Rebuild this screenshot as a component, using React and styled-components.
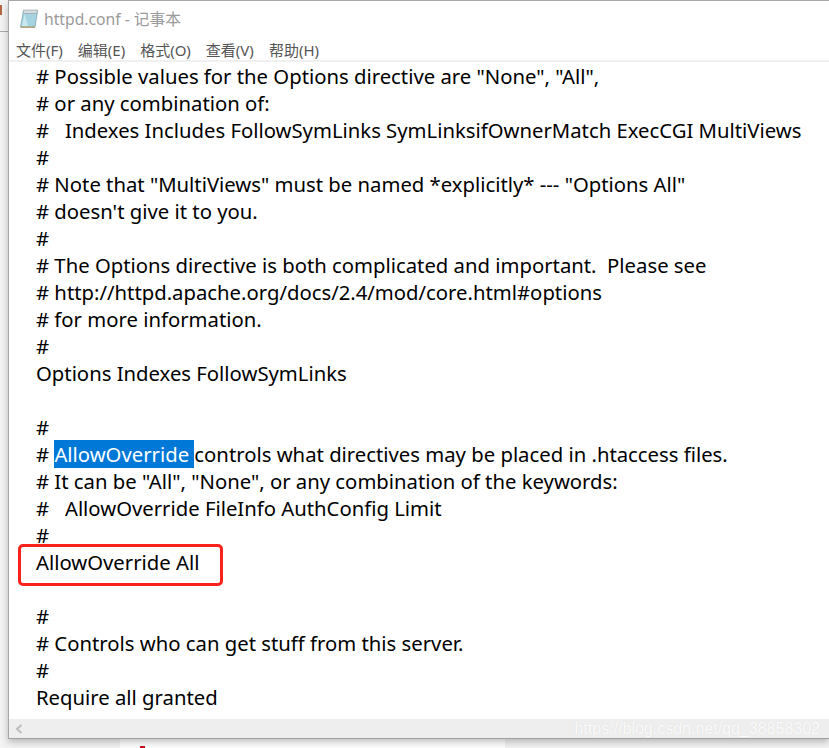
import styled, { createGlobalStyle } from "styled-components";

const Global = createGlobalStyle`
  html, body { margin: 0; padding: 0; background: #f3f3f3; }
  #root { width: 829px; height: 748px; overflow: hidden; }
`;

// everything peeking out behind the window is just background layers
const Desktop = styled.div`
  width: 829px;
  height: 748px;
  padding: 1px 0 0 8px;
  box-sizing: border-box;
  overflow: hidden;
  background:
    linear-gradient(#6a6a9a, #6a6a9a) 215px 0 / 20px 1px no-repeat,
    linear-gradient(#b05a5a, #b05a5a) 408px 0 / 20px 1px no-repeat,
    linear-gradient(#b5673f, #b5673f) 0 5px / 2px 10px no-repeat,
    linear-gradient(#a9a9a9, #a9a9a9) 0 31px / 8px 1px no-repeat,
    linear-gradient(#c8101e, #c8101e) 140px 746px / 5px 2px no-repeat,
    linear-gradient(#fff, #fff) 120px 739px / 385px 9px no-repeat,
    #f3f3f3;
`;

const Window = styled.div`
  width: 821px;
  height: 738px;
  box-sizing: border-box;
  display: flex;
  flex-direction: column;
  background: #fff;
  border-left: 1px solid #a8a8a8;
  border-bottom: 1px solid #a0a0a0;
  box-shadow: 0 -1px 0 #a8a8a8, 0 3px 7px rgba(0, 0, 0, 0.25);
`;

const TitleBar = styled.div`
  height: 35px;
  padding: 0 0 2px 10px;
  flex: none;
  display: flex;
  align-items: center;
  gap: 5px;
  color: #9a9a9a;
  font: 15.7px "Noto Sans", "Noto Sans CJK SC", sans-serif;
`;

const MenuBar = styled.div`
  height: 22px;
  flex: none;
  display: flex;
  gap: 15px;
  padding-left: 7px;
  align-items: center;
  color: #555;
  font: 15px "Noto Sans", "Noto Sans CJK SC", sans-serif;
  border-bottom: 2px solid #f0f0f0;
`;

const Editor = styled.div`
  flex: 1;
  padding: 1px 0 0 27px;
  overflow: hidden;
  color: #000;
  font: 20.3px/27px "Noto Sans", "Open Sans", sans-serif;
`;

const Line = styled.div`
  height: 27px;
  white-space: pre;
`;

// red annotation drawn over the screenshot
const MarkedLine = styled(Line)`
  position: relative;

  &::after {
    content: "";
    position: absolute;
    left: -18px;
    top: -5px;
    width: 205px;
    height: 42px;
    box-sizing: border-box;
    border: 3px solid #f9231b;
    border-radius: 5px;
  }
`;

const Selected = styled.span`
  background: #0078d7;
  color: #fff;
`;

const ScrollBar = styled.div`
  height: 19px;
  flex: none;
  display: flex;
  align-items: center;
  justify-content: space-between;
  padding: 0 9px 0 6px;
  background: #eeeeee;
`;

const Watermark = styled.span`
  color: rgba(255, 255, 255, 0.9);
  text-shadow: 0 0 1px rgba(0, 0, 0, 0.1);
  font: 16px "Liberation Sans", sans-serif;
`;

function NotepadIcon() {
  return (
    <svg width="20" height="20" viewBox="0 0 20 20">
      <path d="M4.5 2h14L16 18H1.5z" fill="#a5d3e0" stroke="#7ba7b8" strokeWidth=".8" />
      <path d="M4.5 1h14l-.5 3.5H4z" fill="#d5dde0" stroke="#8a9aa3" strokeWidth=".6" />
      <path d="M5.5 5L3 17h6z" fill="#c9e8f0" />
      <path d="M1.5 18.2h14.5" stroke="#b89a6a" strokeWidth="1.3" />
    </svg>
  );
}

function ChevronLeft() {
  return (
    <svg width="8" height="10" viewBox="0 0 8 10">
      <path d="M6.5 1L2 5l4.5 4" fill="none" stroke="#bdbdbd" strokeWidth="2" />
    </svg>
  );
}

const menus = ["文件(F)", "编辑(E)", "格式(O)", "查看(V)", "帮助(H)"];

const topLines = [
  '# Possible values for the Options directive are "None", "All",',
  "# or any combination of:",
  "#   Indexes Includes FollowSymLinks SymLinksifOwnerMatch ExecCGI MultiViews",
  "#",
  '# Note that "MultiViews" must be named *explicitly* --- "Options All"',
  "# doesn't give it to you.",
  "#",
  "# The Options directive is both complicated and important.  Please see",
  "# http://httpd.apache.org/docs/2.4/mod/core.html#options",
  "# for more information.",
  "#",
  "Options Indexes FollowSymLinks",
  "",
  "#",
];

const middleLines = [
  '# It can be "All", "None", or any combination of the keywords:',
  "#   AllowOverride FileInfo AuthConfig Limit",
  "#",
];

const bottomLines = [
  "",
  "#",
  "# Controls who can get stuff from this server.",
  "#",
  "Require all granted",
];

export default function App() {
  return (
    <>
      <Global />
      <Desktop>
        <Window>
          <TitleBar>
            <NotepadIcon />
            httpd.conf - 记事本
          </TitleBar>
          <MenuBar>
            {menus.map((m) => (
              <span key={m}>{m}</span>
            ))}
          </MenuBar>
          <Editor>
            {topLines.map((l, i) => (
              <Line key={i}>{l}</Line>
            ))}
            <Line>
              {"# "}
              <Selected>AllowOverride </Selected>
              controls what directives may be placed in .htaccess files.
            </Line>
            {middleLines.map((l, i) => (
              <Line key={i}>{l}</Line>
            ))}
            <MarkedLine>AllowOverride All</MarkedLine>
            {bottomLines.map((l, i) => (
              <Line key={i}>{l}</Line>
            ))}
          </Editor>
          <ScrollBar>
            <ChevronLeft />
            <Watermark>https://blog.csdn.net/qq_38858302</Watermark>
          </ScrollBar>
        </Window>
      </Desktop>
    </>
  );
}
